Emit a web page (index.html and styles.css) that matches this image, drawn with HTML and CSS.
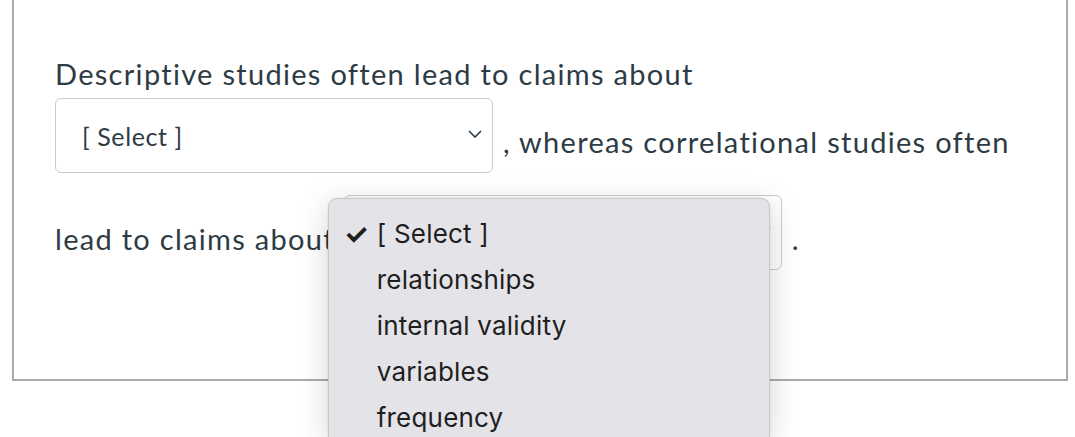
FILE: index.html
```html
<!DOCTYPE html>
<html lang="en">
<head>
<meta charset="utf-8">
<title>Question</title>
<link rel="stylesheet" href="styles.css">
</head>
<body>
<div class="question">
  <div class="question-text">Descriptive studies often lead to claims about <span class="select"><span class="select-value">[ Select ]</span><svg class="chevron" viewBox="0 0 14 8" width="14" height="8"><path d="M1 1 L7 7 L13 1" fill="none" stroke="#2d3b45" stroke-width="1.6"/></svg></span>, whereas correlational studies often lead to claims about <span class="select-wrap"><span class="select"><span class="select-value">[ Select ]</span><svg class="chevron" viewBox="0 0 14 8" width="14" height="8"><path d="M1 1 L7 7 L13 1" fill="none" stroke="#2d3b45" stroke-width="1.6"/></svg></span><span class="menu">
      <span class="menu-item checked"><span class="check">✓</span>[ Select ]</span>
      <span class="menu-item">relationships</span>
      <span class="menu-item">internal validity</span>
      <span class="menu-item">variables</span>
      <span class="menu-item">frequency</span>
    </span></span>.</div>
</div>
</body>
</html>
```
FILE: styles.css
```css
html, body {
  margin: 0;
  padding: 0;
  background: #ffffff;
  overflow: hidden;
}

body {
  width: 1075px;
  height: 437px;
}

.question {
  box-sizing: border-box;
  margin: -10px 0 0 12px;
  width: 1056px;
  border: 2px solid #ababab;
  padding: 62px 41px 91px 41px;
}

.question-text {
  font-family: Lato, "Open Sans", sans-serif;
  font-size: 29px;
  letter-spacing: 1.3px;
  line-height: 40px;
  color: #2d3b45;
}

.select {
  box-sizing: border-box;
  display: inline-flex;
  align-items: center;
  justify-content: space-between;
  width: 438px;
  height: 75px;
  margin: 4px 10px 18px 0;
  padding: 0 10px 0 26px;
  border: 1px solid #c7cdd1;
  border-radius: 6px;
  background: #ffffff;
  vertical-align: 7px;
  font-size: 25px;
  letter-spacing: 0.6px;
}

.select-value {
  color: #2d3b45;
}

.chevron {
  margin-top: -3px;
}

.select-wrap {
  position: relative;
  display: inline-block;
  vertical-align: 7px;
  margin-right: 10px;
}

.select-wrap .select {
  vertical-align: baseline;
  margin: 4px 0 18px 0;
}

.menu {
  position: absolute;
  left: -16px;
  top: 7px;
  width: 442px;
  height: 239px;
  overflow: hidden;
  padding: 12px 0 0 0;
  box-sizing: border-box;
  display: flex;
  flex-direction: column;
  background: #e4e3e8;
  border: 1px solid #c9c8cc;
  border-bottom: none;
  border-radius: 9px 9px 0 0;
  box-shadow: 0 6px 30px rgba(0, 0, 0, 0.17), 0 0 2px rgba(0, 0, 0, 0.12);
  font-family: Inter, "Noto Sans", sans-serif;
  font-size: 26px;
  letter-spacing: 0.2px;
  line-height: 46px;
  color: #1f1f21;
}

.menu-item {
  position: relative;
  padding-left: 48px;
  white-space: nowrap;
}

.check {
  position: absolute;
  left: 15px;
  font-weight: 700;
  font-size: 28px;
}
```
